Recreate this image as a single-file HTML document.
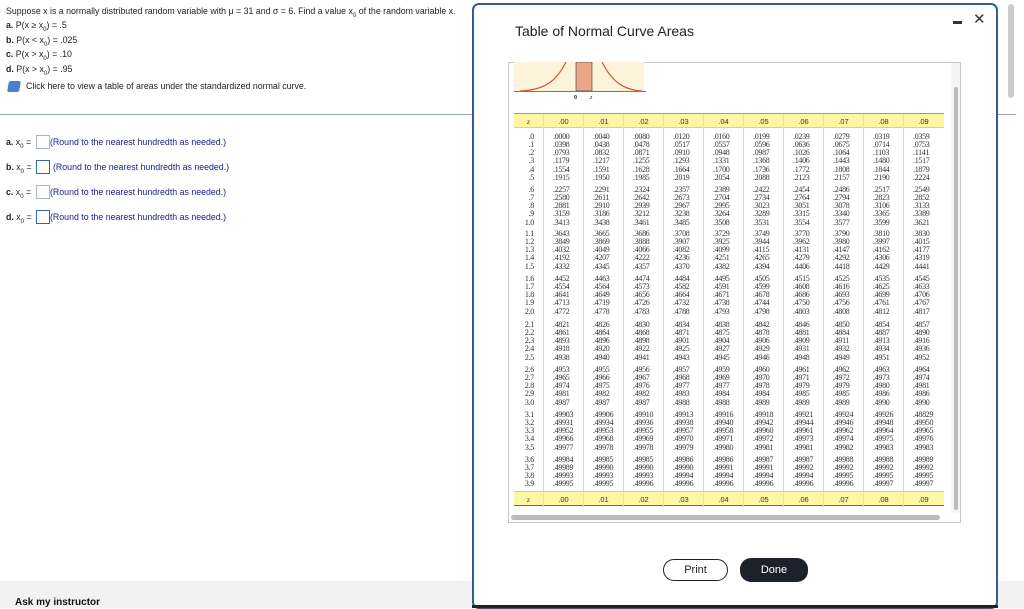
<!DOCTYPE html>
<html><head><meta charset="utf-8"><style>
*{margin:0;padding:0;box-sizing:border-box}
body{width:1024px;height:608px;overflow:hidden;background:#fff;font-family:"Liberation Sans",Arial,sans-serif;position:relative;color:#222}
.a{position:absolute;white-space:nowrap}
.q{font-size:8.8px}
.blue{color:#1a1a8c}
.box{position:absolute;width:14px;height:14px;border:1px solid #aab3cc;background:#fff}
.box.dk{border-color:#3a62b0}
sub{font-size:6px}
#modal{position:absolute;left:472px;top:3px;width:526px;height:606px;border:2px solid #2f5d94;border-radius:7px;background:#fff}
#frame{position:absolute;left:508px;top:62px;width:453px;height:461px;border:1px solid #c6c6c6;background:#fff;overflow:hidden}
.hdr{position:absolute;left:514px;width:430px;height:15px;background:#fdf6a3;font-size:7.5px;color:#333}
.hdr div{position:absolute;top:0;height:15px;line-height:15px;text-align:center;width:40px;border-left:1px solid #ddd}
.g{position:absolute;left:514px;font-family:"Liberation Serif",serif;font-size:8px;line-height:8.15px;color:#333;letter-spacing:-0.3px}
.g div{position:absolute;top:0}
.vl{position:absolute;width:1px;background:#d8d8d8;top:128px;height:363px}
.btn{position:absolute;height:22px;border-radius:11px;font-size:11px;line-height:20px;text-align:center}
</style></head><body>
<div class="a q" style="left:6px;top:6px">Suppose x is a normally distributed random variable with μ = 31 and σ = 6. Find a value x<sub>0</sub> of the random variable x.</div>
<div class="a q" style="left:6px;top:20px"><b>a.</b> P(x ≥ x<sub>0</sub>) = .5</div>
<div class="a q" style="left:6px;top:35px"><b>b.</b> P(x &lt; x<sub>0</sub>) = .025</div>
<div class="a q" style="left:6px;top:49px"><b>c.</b> P(x &gt; x<sub>0</sub>) = .10</div>
<div class="a q" style="left:6px;top:64px"><b>d.</b> P(x &gt; x<sub>0</sub>) = .95</div>
<div class="a" style="left:8px;top:81px;width:12px;height:11px;background:#4a7fd0;border-radius:2px;transform:skewX(-10deg)"></div>
<div class="a q" style="left:26px;top:81px">Click here to view a table of areas under the standardized normal curve.</div>
<div class="a" style="left:0;top:114px;width:1016px;height:1px;background:#9aa4b8"></div>
<div class="a q" style="left:6px;top:137px"><b>a.</b> x<sub>0</sub> =</div><div class="box" style="left:36px;top:135px"></div><div class="a q blue" style="left:50px;top:137px">(Round to the nearest hundredth as needed.)</div>
<div class="a q" style="left:6px;top:162px"><b>b.</b> x<sub>0</sub> =</div><div class="box dk" style="left:36px;top:160px"></div><div class="a q blue" style="left:53px;top:162px">(Round to the nearest hundredth as needed.)</div>
<div class="a q" style="left:6px;top:187px"><b>c.</b> x<sub>0</sub> =</div><div class="box" style="left:36px;top:185px"></div><div class="a q blue" style="left:50px;top:187px">(Round to the nearest hundredth as needed.)</div>
<div class="a q" style="left:6px;top:212px"><b>d.</b> x<sub>0</sub> =</div><div class="box dk" style="left:36px;top:210px"></div><div class="a q blue" style="left:50px;top:212px">(Round to the nearest hundredth as needed.)</div>
<div class="a" style="left:0;top:581px;width:1024px;height:27px;background:#f2f2f2"></div>
<div class="a" style="left:15px;top:597px;font-size:10px;font-weight:bold;color:#111">Ask my instructor</div>
<div class="a" style="left:1008px;top:4px;width:6px;height:94px;background:#ccc;border-radius:3px"></div>

<div id="modal"></div>
<div class="a" style="left:515px;top:23px;font-size:14px;color:#222">Table of Normal Curve Areas</div>
<div class="a" style="left:953px;top:21px;width:9px;height:3px;background:#333"></div>
<div class="a" style="left:973px;top:10px;font-size:15px;color:#333">✕</div>
<div id="frame"></div>
<div class="a" style="left:514px;top:62px;width:130px;height:30px;background:#fdf3da"></div>
<svg class="a" style="left:514px;top:62px" width="132" height="32"><rect x="62" y="0" width="16" height="29" fill="#e8a888" stroke="#333" stroke-width="0.6"/><path d="M6 29 C30 28 42 20 52 0 M88 0 C98 20 110 28 128 29" fill="none" stroke="#d84a2a" stroke-width="1.1"/><line x1="0" y1="29.5" x2="132" y2="29.5" stroke="#777" stroke-width="1"/></svg>
<div class="a" style="left:574px;top:95px;font-family:'Liberation Serif',serif;font-size:6px;font-weight:bold">0</div>
<div class="a" style="left:590px;top:95px;font-family:'Liberation Serif',serif;font-size:6px;font-style:italic">z</div>
<div class="a" style="left:951px;top:63px;width:9px;height:450px;background:#f4f4f4"></div>
<div class="a" style="left:954px;top:87px;width:4px;height:423px;background:#bbb;border-radius:2px"></div>
<div class="a" style="left:511px;top:515px;width:429px;height:5px;background:#bbb;border-radius:3px"></div>

<div class="hdr" style="top:113px;border-top:1px solid #999;border-bottom:1px solid #ccc"><div style="left:0;width:29px;border:none;font-style:italic;font-family:'Liberation Serif',serif">z</div><div style="left:29px">.00</div><div style="left:69px">.01</div><div style="left:109px">.02</div><div style="left:149px">.03</div><div style="left:189px">.04</div><div style="left:229px">.05</div><div style="left:269px">.06</div><div style="left:309px">.07</div><div style="left:349px">.08</div><div style="left:389px">.09</div></div>
<div class="hdr" style="top:491px;border-top:1px solid #ccc;border-bottom:1px solid #666"><div style="left:0;width:29px;border:none;font-style:italic;font-family:'Liberation Serif',serif">z</div><div style="left:29px">.00</div><div style="left:69px">.01</div><div style="left:109px">.02</div><div style="left:149px">.03</div><div style="left:189px">.04</div><div style="left:229px">.05</div><div style="left:269px">.06</div><div style="left:309px">.07</div><div style="left:349px">.08</div><div style="left:389px">.09</div></div>
<div class="vl" style="left:543px"></div><div class="vl" style="left:583px"></div><div class="vl" style="left:623px"></div><div class="vl" style="left:663px"></div><div class="vl" style="left:703px"></div><div class="vl" style="left:743px"></div><div class="vl" style="left:783px"></div><div class="vl" style="left:823px"></div><div class="vl" style="left:863px"></div><div class="vl" style="left:903px"></div>

<div class="g" style="top:133px"><div style="left:0;width:20px;text-align:right">.0<br>.1<br>.2<br>.3<br>.4<br>.5</div><div style="left:39px">.0000<br>.0398<br>.0793<br>.1179<br>.1554<br>.1915</div><div style="left:79px">.0040<br>.0438<br>.0832<br>.1217<br>.1591<br>.1950</div><div style="left:119px">.0080<br>.0478<br>.0871<br>.1255<br>.1628<br>.1985</div><div style="left:159px">.0120<br>.0517<br>.0910<br>.1293<br>.1664<br>.2019</div><div style="left:199px">.0160<br>.0557<br>.0948<br>.1331<br>.1700<br>.2054</div><div style="left:239px">.0199<br>.0596<br>.0987<br>.1368<br>.1736<br>.2088</div><div style="left:279px">.0239<br>.0636<br>.1026<br>.1406<br>.1772<br>.2123</div><div style="left:319px">.0279<br>.0675<br>.1064<br>.1443<br>.1808<br>.2157</div><div style="left:359px">.0319<br>.0714<br>.1103<br>.1480<br>.1844<br>.2190</div><div style="left:399px">.0359<br>.0753<br>.1141<br>.1517<br>.1879<br>.2224</div></div>

<div class="g" style="top:186px"><div style="left:0;width:20px;text-align:right">.6<br>.7<br>.8<br>.9<br>1.0</div><div style="left:39px">.2257<br>.2580<br>.2881<br>.3159<br>.3413</div><div style="left:79px">.2291<br>.2611<br>.2910<br>.3186<br>.3438</div><div style="left:119px">.2324<br>.2642<br>.2939<br>.3212<br>.3461</div><div style="left:159px">.2357<br>.2673<br>.2967<br>.3238<br>.3485</div><div style="left:199px">.2389<br>.2704<br>.2995<br>.3264<br>.3508</div><div style="left:239px">.2422<br>.2734<br>.3023<br>.3289<br>.3531</div><div style="left:279px">.2454<br>.2764<br>.3051<br>.3315<br>.3554</div><div style="left:319px">.2486<br>.2794<br>.3078<br>.3340<br>.3577</div><div style="left:359px">.2517<br>.2823<br>.3106<br>.3365<br>.3599</div><div style="left:399px">.2549<br>.2852<br>.3133<br>.3389<br>.3621</div></div>

<div class="g" style="top:230px"><div style="left:0;width:20px;text-align:right">1.1<br>1.2<br>1.3<br>1.4<br>1.5</div><div style="left:39px">.3643<br>.3849<br>.4032<br>.4192<br>.4332</div><div style="left:79px">.3665<br>.3869<br>.4049<br>.4207<br>.4345</div><div style="left:119px">.3686<br>.3888<br>.4066<br>.4222<br>.4357</div><div style="left:159px">.3708<br>.3907<br>.4082<br>.4236<br>.4370</div><div style="left:199px">.3729<br>.3925<br>.4099<br>.4251<br>.4382</div><div style="left:239px">.3749<br>.3944<br>.4115<br>.4265<br>.4394</div><div style="left:279px">.3770<br>.3962<br>.4131<br>.4279<br>.4406</div><div style="left:319px">.3790<br>.3980<br>.4147<br>.4292<br>.4418</div><div style="left:359px">.3810<br>.3997<br>.4162<br>.4306<br>.4429</div><div style="left:399px">.3830<br>.4015<br>.4177<br>.4319<br>.4441</div></div>

<div class="g" style="top:275px"><div style="left:0;width:20px;text-align:right">1.6<br>1.7<br>1.8<br>1.9<br>2.0</div><div style="left:39px">.4452<br>.4554<br>.4641<br>.4713<br>.4772</div><div style="left:79px">.4463<br>.4564<br>.4649<br>.4719<br>.4778</div><div style="left:119px">.4474<br>.4573<br>.4656<br>.4726<br>.4783</div><div style="left:159px">.4484<br>.4582<br>.4664<br>.4732<br>.4788</div><div style="left:199px">.4495<br>.4591<br>.4671<br>.4738<br>.4793</div><div style="left:239px">.4505<br>.4599<br>.4678<br>.4744<br>.4798</div><div style="left:279px">.4515<br>.4608<br>.4686<br>.4750<br>.4803</div><div style="left:319px">.4525<br>.4616<br>.4693<br>.4756<br>.4808</div><div style="left:359px">.4535<br>.4625<br>.4699<br>.4761<br>.4812</div><div style="left:399px">.4545<br>.4633<br>.4706<br>.4767<br>.4817</div></div>

<div class="g" style="top:321px"><div style="left:0;width:20px;text-align:right">2.1<br>2.2<br>2.3<br>2.4<br>2.5</div><div style="left:39px">.4821<br>.4861<br>.4893<br>.4918<br>.4938</div><div style="left:79px">.4826<br>.4864<br>.4896<br>.4920<br>.4940</div><div style="left:119px">.4830<br>.4868<br>.4898<br>.4922<br>.4941</div><div style="left:159px">.4834<br>.4871<br>.4901<br>.4925<br>.4943</div><div style="left:199px">.4838<br>.4875<br>.4904<br>.4927<br>.4945</div><div style="left:239px">.4842<br>.4878<br>.4906<br>.4929<br>.4946</div><div style="left:279px">.4846<br>.4881<br>.4909<br>.4931<br>.4948</div><div style="left:319px">.4850<br>.4884<br>.4911<br>.4932<br>.4949</div><div style="left:359px">.4854<br>.4887<br>.4913<br>.4934<br>.4951</div><div style="left:399px">.4857<br>.4890<br>.4916<br>.4936<br>.4952</div></div>

<div class="g" style="top:366px"><div style="left:0;width:20px;text-align:right">2.6<br>2.7<br>2.8<br>2.9<br>3.0</div><div style="left:39px">.4953<br>.4965<br>.4974<br>.4981<br>.4987</div><div style="left:79px">.4955<br>.4966<br>.4975<br>.4982<br>.4987</div><div style="left:119px">.4956<br>.4967<br>.4976<br>.4982<br>.4987</div><div style="left:159px">.4957<br>.4968<br>.4977<br>.4983<br>.4988</div><div style="left:199px">.4959<br>.4969<br>.4977<br>.4984<br>.4988</div><div style="left:239px">.4960<br>.4970<br>.4978<br>.4984<br>.4989</div><div style="left:279px">.4961<br>.4971<br>.4979<br>.4985<br>.4989</div><div style="left:319px">.4962<br>.4972<br>.4979<br>.4985<br>.4989</div><div style="left:359px">.4963<br>.4973<br>.4980<br>.4986<br>.4990</div><div style="left:399px">.4964<br>.4974<br>.4981<br>.4986<br>.4990</div></div>

<div class="g" style="top:411px"><div style="left:0;width:20px;text-align:right">3.1<br>3.2<br>3.3<br>3.4<br>3.5</div><div style="left:39px">.49903<br>.49931<br>.49952<br>.49966<br>.49977</div><div style="left:79px">.49906<br>.49934<br>.49953<br>.49968<br>.49978</div><div style="left:119px">.49910<br>.49936<br>.49955<br>.49969<br>.49978</div><div style="left:159px">.49913<br>.49938<br>.49957<br>.49970<br>.49979</div><div style="left:199px">.49916<br>.49940<br>.49958<br>.49971<br>.49980</div><div style="left:239px">.49918<br>.49942<br>.49960<br>.49972<br>.49981</div><div style="left:279px">.49921<br>.49944<br>.49961<br>.49973<br>.49981</div><div style="left:319px">.49924<br>.49946<br>.49962<br>.49974<br>.49982</div><div style="left:359px">.49926<br>.49948<br>.49964<br>.49975<br>.49983</div><div style="left:399px">.48829<br>.49950<br>.49965<br>.49976<br>.49983</div></div>

<div class="g" style="top:456px"><div style="left:0;width:20px;text-align:right">3.6<br>3.7<br>3.8<br>3.9</div><div style="left:39px">.49984<br>.49989<br>.49993<br>.49995</div><div style="left:79px">.49985<br>.49990<br>.49993<br>.49995</div><div style="left:119px">.49985<br>.49990<br>.49993<br>.49996</div><div style="left:159px">.49986<br>.49990<br>.49994<br>.49996</div><div style="left:199px">.49986<br>.49991<br>.49994<br>.49996</div><div style="left:239px">.49987<br>.49991<br>.49994<br>.49996</div><div style="left:279px">.49987<br>.49992<br>.49994<br>.49996</div><div style="left:319px">.49988<br>.49992<br>.49995<br>.49996</div><div style="left:359px">.49988<br>.49992<br>.49995<br>.49997</div><div style="left:399px">.49989<br>.49992<br>.49995<br>.49997</div></div>

<div class="btn" style="left:663px;top:559px;width:65px;border:1.5px solid #222;color:#222">Print</div>
<div class="btn" style="left:740px;top:558px;width:68px;height:24px;line-height:24px;background:#1c212b;color:#fff">Done</div>
<div class="a" style="left:472px;top:605px;width:526px;height:3px;background:#222"></div>
</body></html>
